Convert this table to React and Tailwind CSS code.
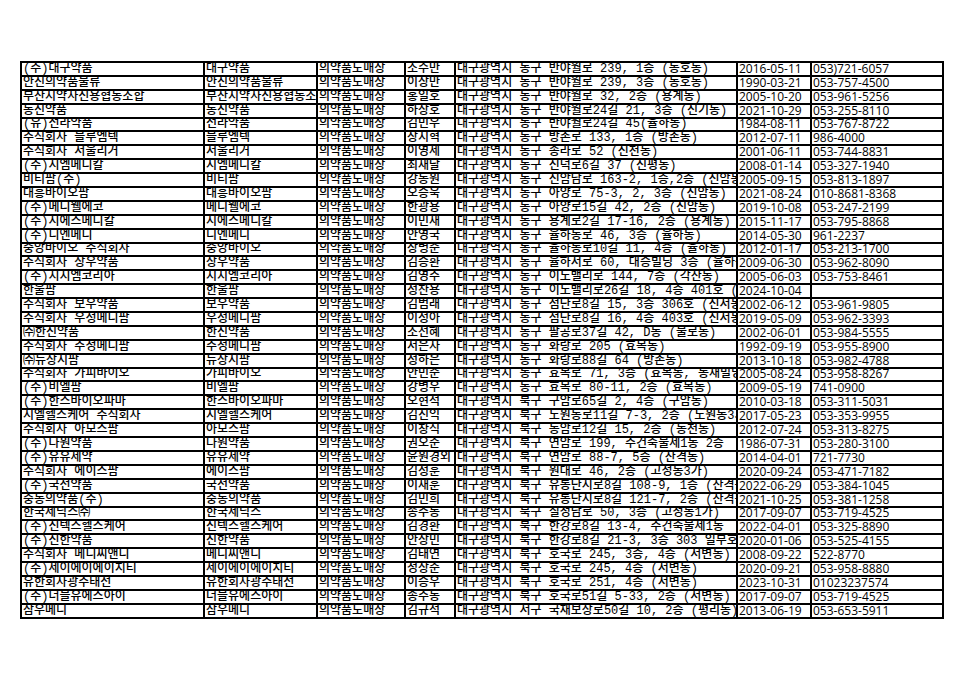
import React from 'react';

const rows = [
  ['(주)대구약품', '대구약품', '조수만', '대구광역시 동구 반야월로 239, 1층 (동호동)', '2016-05-11', '053)721-6057'],
  ['안진의약품물류', '안진의약품물류', '이상만', '대구광역시 동구 반야월로 239, 3층 (동호동)', '1990-03-21', '053-757-4500'],
  ['부산시약사신용협동조합', '부산시약사신용협동조합', '홍일호', '대구광역시 동구 반야월로 32, 2층 (용계동)', '2005-10-20', '053-961-5256'],
  ['동신약품', '동신약품', '하상호', '대구광역시 동구 반야월로24길 21, 3층 (신기동)', '2021-10-29', '053-255-8110'],
  ['(유)전라약품', '전라약품', '김민우', '대구광역시 동구 반야월로24길 45(율하동)', '1984-08-11', '053-767-8722'],
  ['주식회사 블루엠텍', '블루엠텍', '장시혁', '대구광역시 동구 방촌로 133, 1층 (방촌동)', '2012-07-11', '986-4000'],
  ['주식회사 서울리거', '서울리거', '이영세', '대구광역시 동구 송라로 52 (신천동)', '2001-06-11', '053-744-8831'],
  ['(주)지엠메디칼', '지엠메디칼', '최재달', '대구광역시 동구 신덕로6길 37 (신평동)', '2008-01-14', '053-327-1940'],
  ['비티팜(주)', '비티팜', '강동원', '대구광역시 동구 신암남로 163-2, 1층,2층 (신암동)', '2005-09-15', '053-813-1897'],
  ['대흥바이오팜', '대흥바이오팜', '오승욱', '대구광역시 동구 아양로 75-3, 2, 3층 (신암동)', '2021-08-24', '010-8681-8368'],
  ['(주)메디웰에코', '메디웰에코', '한광용', '대구광역시 동구 아양로15길 42, 2층 (신암동)', '2019-10-08', '053-247-2199'],
  ['(주)지에스메디칼', '지에스메디칼', '이민재', '대구광역시 동구 용계로2길 17-16, 2층 (용계동)', '2015-11-17', '053-795-8868'],
  ['(주)디엔메디', '디엔메디', '안영국', '대구광역시 동구 율하동로 46, 3층 (율하동)', '2014-05-30', '961-2237'],
  ['중앙바이오 주식회사', '중앙바이오', '장병준', '대구광역시 동구 율하동로10길 11, 4층 (율하동)', '2012-01-17', '053-213-1700'],
  ['주식회사 상우약품', '상우약품', '김승환', '대구광역시 동구 율하서로 60, 대승빌딩 3층 (율하동)', '2009-06-30', '053-962-8090'],
  ['(주)시시엠코리아', '시시엠코리아', '김영주', '대구광역시 동구 이노밸리로 144, 7층 (각산동)', '2005-06-03', '053-753-8461'],
  ['한울팜', '한울팜', '정찬용', '대구광역시 동구 이노밸리로26길 18, 4층 401호 (각산동)', '2024-10-04', ''],
  ['주식회사 보우약품', '보우약품', '김범래', '대구광역시 동구 첨단로8길 15, 3층 306호 (신서동)', '2002-06-12', '053-961-9805'],
  ['주식회사 우정메디팜', '우정메디팜', '이정아', '대구광역시 동구 첨단로8길 16, 4층 403호 (신서동)', '2019-05-09', '053-962-3393'],
  ['㈜한신약품', '한신약품', '조선혜', '대구광역시 동구 팔공로37길 42, D동 (불로동)', '2002-06-01', '053-984-5555'],
  ['주식회사 주성메디팜', '주성메디팜', '서은자', '대구광역시 동구 화랑로 205 (효목동)', '1992-09-19', '053-955-8900'],
  ['㈜뉴상지팜', '뉴상지팜', '정하은', '대구광역시 동구 화랑로88길 64 (방촌동)', '2013-10-18', '053-982-4788'],
  ['주식회사 가피바이오', '가피바이오', '안민준', '대구광역시 동구 효목로 71, 3층 (효목동, 동재빌딩)', '2005-08-24', '053-958-8267'],
  ['(주)비엘팜', '비엘팜', '강병우', '대구광역시 동구 효목로 80-11, 2층 (효목동)', '2009-05-19', '741-0900'],
  ['(주)한스바이오파마', '한스바이오파마', '오현석', '대구광역시 북구 구암로65길 2, 4층 (구암동)', '2010-03-18', '053-311-5031'],
  ['지엘헬스케어 주식회사', '지엘헬스케어', '김진익', '대구광역시 북구 노원동로11길 7-3, 2층 (노원동3가)', '2017-05-23', '053-353-9955'],
  ['주식회사 아모스팜', '아모스팜', '이창식', '대구광역시 북구 동암로12길 15, 2층 (동천동)', '2012-07-24', '053-313-8275'],
  ['(주)다원약품', '다원약품', '권오준', '대구광역시 북구 연암로 199, 주건축물제1동 2층', '1986-07-31', '053-280-3100'],
  ['(주)유유제약', '유유제약', '윤원경외', '대구광역시 북구 연암로 88-7, 5층 (산격동)', '2014-04-01', '721-7730'],
  ['주식회사 에이스팜', '에이스팜', '김정훈', '대구광역시 북구 원대로 46, 2층 (고성동3가)', '2020-09-24', '053-471-7182'],
  ['(주)국전약품', '국전약품', '이재훈', '대구광역시 북구 유통단지로8길 108-9, 1층 (산격동)', '2022-06-29', '053-384-1045'],
  ['중동의약품(주)', '중동의약품', '김민희', '대구광역시 북구 유통단지로8길 121-7, 2층 (산격동)', '2021-10-25', '053-381-1258'],
  ['한국제닉스㈜', '한국제닉스', '송주동', '대구광역시 북구 칠성남로 50, 3층 (고성동1가)', '2017-09-07', '053-719-4525'],
  ['(주)신텍스헬스케어', '신텍스헬스케어', '김경환', '대구광역시 북구 한강로8길 13-4, 주건축물제1동', '2022-04-01', '053-325-8890'],
  ['(주)신한약품', '신한약품', '안상민', '대구광역시 북구 한강로8길 21-3, 3층 303 일부호', '2020-01-06', '053-525-4155'],
  ['주식회사 메디씨앤디', '메디씨앤디', '김태연', '대구광역시 북구 호국로 245, 3층, 4층 (서변동)', '2008-09-22', '522-8770'],
  ['(주)제이에이에이치티', '제이에이에이치티', '성상준', '대구광역시 북구 호국로 245, 4층 (서변동)', '2020-09-21', '053-958-8880'],
  ['유한회사광주태전', '유한회사광주태전', '이승우', '대구광역시 북구 호국로 251, 4층 (서변동)', '2023-10-31', '01023237574'],
  ['(주)더블유에스아이', '더블유에스아이', '송주동', '대구광역시 북구 호국로51길 5-33, 2층 (서변동)', '2017-09-07', '053-719-4525'],
  ['삼우메디', '삼우메디', '김규석', '대구광역시 서구 국채보상로50길 10, 2층 (평리동)', '2013-06-19', '053-653-5911'],
];

// 한글 셀은 반각 영문 폭을 맞추려고 고정폭 글꼴을 앞에 둔다
const KR = '"Liberation Mono", "Noto Sans CJK KR", monospace';
const NUM = '"Open Sans", "Noto Sans CJK KR", sans-serif';

function Cell({ children, num }) {
  return (
    <div
      className="h-[13.9px] border-b-2 border-r-2 border-black overflow-hidden whitespace-nowrap flex items-end pl-[1px] text-[12px] leading-[12px] font-medium text-black"
      style={{ fontFamily: num ? NUM : KR }}
    >
      {children}
    </div>
  );
}

export default function App() {
  return (
    <div className="w-[966px] h-[683px] bg-white overflow-hidden">
      <div className="ml-[20px] mt-[61px] w-fit border-t-2 border-l-2 border-black grid grid-cols-[183px_113px_88px_50px_282px_74px_132px]">
        {rows.map((r, i) => (
          <React.Fragment key={i}>
            <Cell>{r[0]}</Cell>
            <Cell>{r[1]}</Cell>
            <Cell>의약품도매상</Cell>
            <Cell>{r[2]}</Cell>
            <Cell>{r[3]}</Cell>
            <Cell num>{r[4]}</Cell>
            <Cell num>{r[5]}</Cell>
          </React.Fragment>
        ))}
      </div>
    </div>
  );
}
